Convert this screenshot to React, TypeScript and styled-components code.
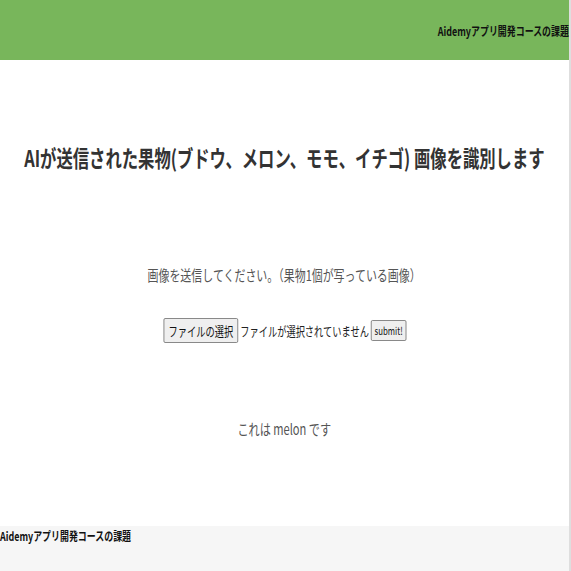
import React from 'react'
import styled, { createGlobalStyle } from 'styled-components'

const GlobalStyle = createGlobalStyle`
  html, body {
    margin: 0;
    padding: 0;
    background: #ffffff;
  }
  body {
    font-family: 'Noto Sans CJK JP', 'Noto Sans', sans-serif;
    color: #333333;
  }
`

const Page = styled.div`
  display: flex;
  flex-direction: column;
  width: 100%;
  height: 571px;
  box-sizing: border-box;
  border-right: 2px solid #dedede;
  overflow: hidden;
`

// narrow glyphs, scaled from the side the text is anchored to
const Squeeze = styled.span<{ $origin?: string; $scale?: number }>`
  display: inline-block;
  white-space: nowrap;
  transform: scaleX(${({ $scale }) => $scale ?? 0.74});
  transform-origin: ${({ $origin }) => $origin ?? 'center'};
`

const Header = styled.header`
  display: flex;
  align-items: center;
  justify-content: flex-end;
  height: 60px;
  flex-shrink: 0;
  background-color: #78b65b;
  font-size: 12px;
  font-weight: 700;
  color: #111111;
`

const Main = styled.main`
  flex: 1;
  display: flex;
  flex-direction: column;
  align-items: center;
`

const Title = styled.h1`
  margin: 82px 0 0;
  font-size: 23px;
  line-height: 30px;
  font-weight: 700;
  color: #333333;
`

const Lead = styled.p`
  margin: 93px 0 0;
  font-size: 15px;
  line-height: 20px;
  color: #555555;
`

const Form = styled.form`
  display: flex;
  justify-content: center;
  margin-top: 33px;
`

const FormRow = styled.div`
  display: flex;
  align-items: center;
  gap: 3px;
  font-size: 13px;
  color: #222222;
`

const FormButton = styled.button<{ $small?: boolean }>`
  font-family: inherit;
  font-size: ${({ $small }) => ($small ? '11px' : '13px')};
  line-height: 1;
  color: #111111;
  height: ${({ $small }) => ($small ? '21px' : '25px')};
  padding: 0 ${({ $small }) => ($small ? '4px' : '6px')};
  background: #efefef;
  border: 1px solid #767676;
  border-radius: 2px;
`

const Result = styled.p`
  margin: 76px 0 0;
  font-size: 15px;
  line-height: 20px;
  color: #555555;
`

const Footer = styled.footer`
  height: 45px;
  flex-shrink: 0;
  background-color: #f6f6f6;
  font-size: 12px;
  font-weight: 700;
  line-height: 20px;
  color: #111111;
`

export default function App() {
  return (
    <>
      <GlobalStyle />
      <Page>
        <Header>
          <Squeeze $origin="right" $scale={0.745}>Aidemyアプリ開発コースの課題</Squeeze>
        </Header>
        <Main>
          <Title>
            <Squeeze $scale={0.71}>AIが送信された果物(ブドウ、メロン、モモ、イチゴ) 画像を識別します</Squeeze>
          </Title>
          <Lead>
            <Squeeze $scale={0.73}>画像を送信してください。（果物1個が写っている画像）</Squeeze>
          </Lead>
          <Form onSubmit={(e) => e.preventDefault()}>
            <Squeeze $scale={0.71}>
              <FormRow>
                <FormButton type="button">ファイルの選択</FormButton>
                <span>ファイルが選択されていません</span>
                <FormButton type="submit" $small>
                  submit!
                </FormButton>
              </FormRow>
            </Squeeze>
          </Form>
          <Result>
            <Squeeze $scale={0.74}>これは melon です</Squeeze>
          </Result>
        </Main>
        <Footer>
          <Squeeze $origin="left" $scale={0.745}>Aidemyアプリ開発コースの課題</Squeeze>
        </Footer>
      </Page>
    </>
  )
}
